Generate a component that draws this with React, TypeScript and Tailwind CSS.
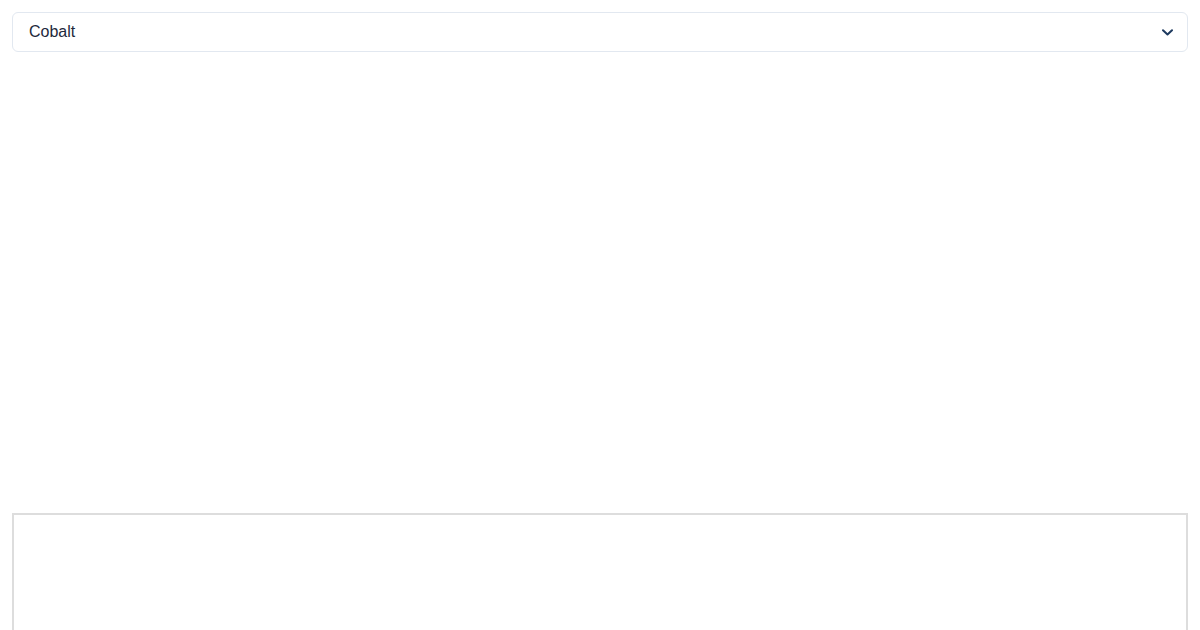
import React from "react";

export default function App() {
  return (
    <div className="w-[1200px] h-[630px] overflow-hidden bg-white p-3 flex flex-col" style={{ fontFamily: '"Liberation Sans", Arial, sans-serif' }}>
      <div className="h-10 shrink-0 flex items-center justify-between border border-[#e2e8f0] rounded-md pl-4 pr-[14px] text-[16px] text-[#1e293b] bg-white">
        <span>Cobalt</span>
        <svg width="11" height="7" viewBox="0 0 11 7" fill="none">
          <path d="M1 1.2 L5.5 5.5 L10 1.2" stroke="#1e3a5f" strokeWidth="2" strokeLinecap="round" strokeLinejoin="round" />
        </svg>
      </div>
      <div className="h-[461px] shrink-0" />
      <div className="h-[300px] shrink-0 border-2 border-[#dddddd] bg-white" />
    </div>
  );
}
